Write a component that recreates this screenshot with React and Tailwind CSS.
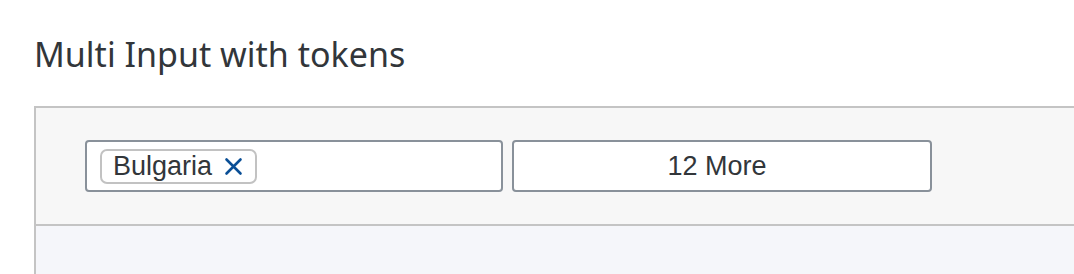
import React from 'react';

const Token = ({ label }) => (
  <span className="flex items-center h-[35px] pl-[11px] pr-[12px] border-2 border-[#c2c2c2] rounded-[7px] bg-white">
    <span className="text-[27px] leading-none text-[#32363a]">{label}</span>
    <svg className="ml-[12px]" width="19" height="19" viewBox="0 0 19 19" fill="none">
      <path d="M2.5 2.5 L16.5 16.5 M16.5 2.5 L2.5 16.5" stroke="#0a4f96" strokeWidth="2.6" strokeLinecap="round" />
    </svg>
  </span>
);

const App = () => {
  return (
    <div className="w-[1074px] h-[274px] bg-white overflow-hidden flex flex-col" style={{ fontFamily: '"Liberation Sans", Arial, sans-serif' }}>
      <h2
        className="pt-[34px] pl-[34px] text-[34px] leading-[40px] text-[#32363a] font-normal"
        style={{ fontFamily: '"Noto Sans", "Liberation Sans", sans-serif' }}
      >
        Multi Input with tokens
      </h2>
      <div className="mt-[32px] ml-[34px] flex-1 flex flex-col border-l-2 border-[#c4c4c4]">
        <div className="border-t-2 border-b-2 border-[#c4c4c4] bg-[#f7f7f7] py-[32px] pl-[49px] flex gap-[9px]">
          <div className="w-[418px] h-[52px] bg-white border-2 border-[#89919a] rounded-[4px] flex items-center pl-[13px]">
            <Token label="Bulgaria" />
          </div>
          <button className="w-[420px] h-[52px] pr-[10px] bg-white border-2 border-[#89919a] rounded-[4px] text-[27px] leading-none text-[#32363a]">
            12 More
          </button>
        </div>
        <div className="flex-1 bg-[#f5f6fa]"></div>
      </div>
    </div>
  );
};

export default App;
